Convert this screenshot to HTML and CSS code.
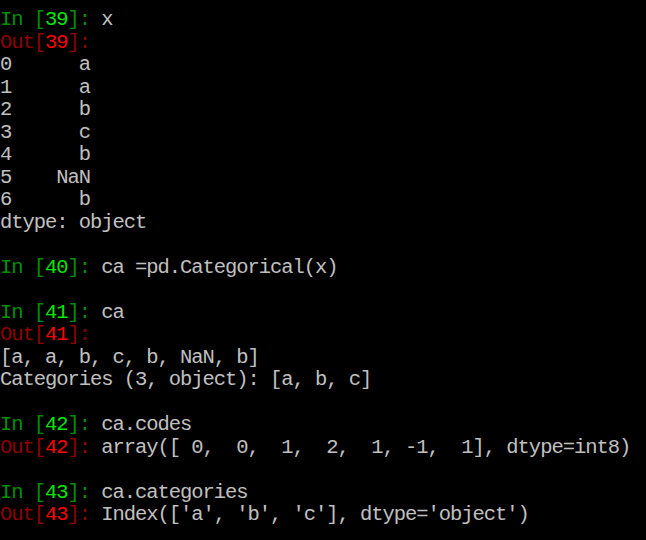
FILE: index.html
```html
<!DOCTYPE html>
<html>
<head>
<meta charset="utf-8">
<link rel="stylesheet" href="styles.css">
</head>
<body>
<pre class="console"><span class="in">In [<b>39</b>]: </span>x
<span class="out">Out[<b>39</b>]:</span>
0      a
1      a
2      b
3      c
4      b
5    NaN
6      b
dtype: object

<span class="in">In [<b>40</b>]: </span>ca =pd.Categorical(x)

<span class="in">In [<b>41</b>]: </span>ca
<span class="out">Out[<b>41</b>]:</span>
[a, a, b, c, b, NaN, b]
Categories (3, object): [a, b, c]

<span class="in">In [<b>42</b>]: </span>ca.codes
<span class="out">Out[<b>42</b>]: </span>array([ 0,  0,  1,  2,  1, -1,  1], dtype=int8)

<span class="in">In [<b>43</b>]: </span>ca.categories
<span class="out">Out[<b>43</b>]: </span>Index(['a', 'b', 'c'], dtype='object')</pre>
</body>
</html>
```
FILE: styles.css
```css
html, body {
  margin: 0;
  padding: 0;
  background: #000;
  width: 646px;
  height: 540px;
  overflow: hidden;
}
.console {
  margin: 0;
  padding: 9px 0 0 0;
  font-family: "Liberation Mono", monospace;
  font-size: 20.5px;
  letter-spacing: -1.05px;
  line-height: 22.5px;
  color: #c0c0c0;
  white-space: pre;
}
.console b {
  font-weight: normal;
}
.in {
  color: #009000;
}
.in b {
  color: #00e800;
}
.out {
  color: #900000;
}
.out b {
  color: #ff0000;
}
```
